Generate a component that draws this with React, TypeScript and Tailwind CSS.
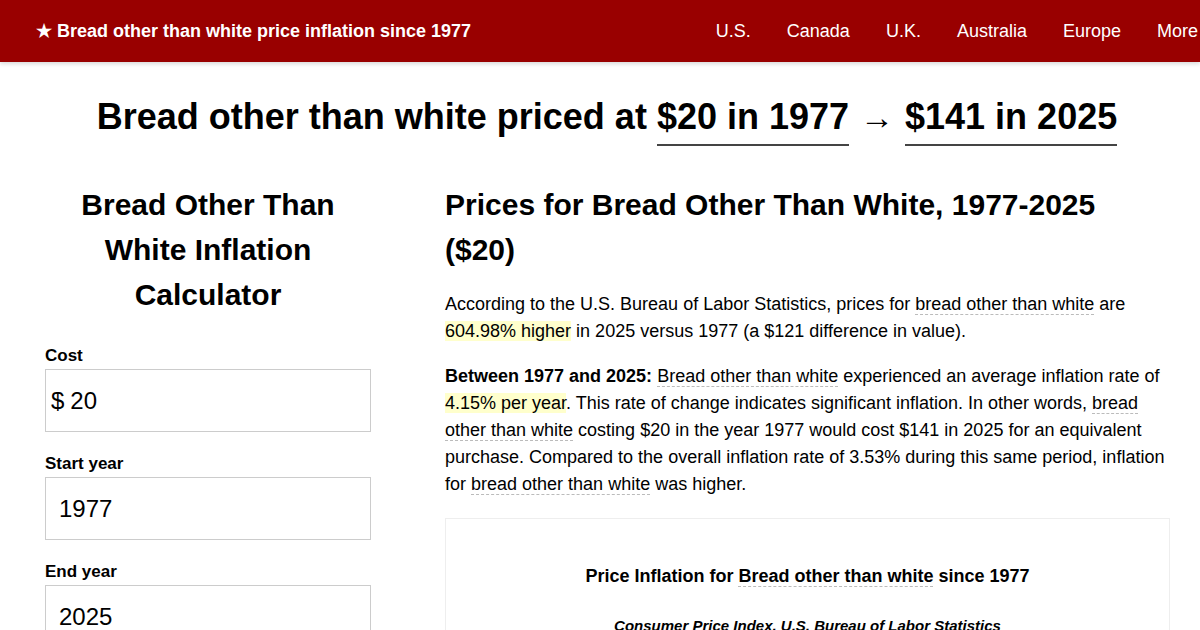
const navItems = ['U.S.', 'Canada', 'U.K.', 'Australia', 'Europe', 'More'];

function Term({ children }: { children: React.ReactNode }) {
  return <span className="border-b border-dashed border-[#bbb]">{children}</span>;
}

function Mark({ children }: { children: React.ReactNode }) {
  return <span className="bg-[#ffffcc]">{children}</span>;
}

function Field({ label, value, prefix }: { label: string; value: string; prefix?: boolean }) {
  return (
    <div className="mb-[19px]">
      <label className="block text-[17px] font-bold leading-[26px]">{label}</label>
      <div className="flex items-center h-[63px] border border-[#ccc] bg-white text-[24px]">
        {prefix ? <span className="pl-[5px] pr-[6px]">$</span> : null}
        <span className={prefix ? '' : 'pl-[13px]'}>{value}</span>
      </div>
    </div>
  );
}

export default function App() {
  return (
    <div className="min-h-[630px] bg-white text-black font-['Liberation_Sans',Arial,sans-serif] overflow-hidden">
      <header className="h-[62px] bg-[#990000] text-white flex items-center pl-[36px] shadow-[0_2px_4px_rgba(0,0,0,0.15)] relative">
        <div className="text-[18px] font-bold whitespace-nowrap">★ Bread other than white price inflation since 1977</div>
        <nav className="ml-auto flex gap-[36px] text-[18px] whitespace-nowrap mr-[2px]">
          {navItems.map((item) => (
            <span key={item}>{item}</span>
          ))}
        </nav>
      </header>

      <h1 className="flex items-start justify-center text-[36px] font-bold mt-[33px] leading-[44px] whitespace-nowrap pl-[14px]">
        <span>Bread other than white priced at&nbsp;</span>
        <span className="border-b-2 border-[#444] pb-[5px]">$20 in 1977</span>
        <span className="font-normal text-[34px] mx-[11px]">→</span>
        <span className="border-b-2 border-[#444] pb-[5px]">$141 in 2025</span>
      </h1>

      <div className="flex mt-[36px] px-[45px] gap-[74px]">
        <aside className="w-[326px] shrink-0">
          <h2 className="text-center text-[30px] font-bold leading-[45px] px-[20px]">
            Bread Other Than White Inflation Calculator
          </h2>
          <div className="mt-[26px]">
            <Field label="Cost" value="20" prefix />
            <Field label="Start year" value="1977" />
            <Field label="End year" value="2025" />
          </div>
        </aside>

        <main className="flex-1 min-w-0 -mr-[15px]">
          <h2 className="text-[30px] font-bold leading-[45px]">
            Prices for Bread Other Than White, 1977-2025 ($20)
          </h2>
          <p className="mt-[19px] text-[18px] leading-[27px]">
            According to the U.S. Bureau of Labor Statistics, prices for <Term>bread other than white</Term> are{' '}
            <Mark>604.98% higher</Mark> in 2025 versus 1977 (a $121 difference in value).
          </p>
          <p className="mt-[18px] text-[18px] leading-[27px]">
            <b>Between 1977 and 2025:</b> <Term>Bread other than white</Term> experienced an average inflation rate of{' '}
            <Mark>4.15% per year</Mark>. This rate of change indicates significant inflation. In other words,{' '}
            <Term>bread other than white</Term> costing $20 in the year 1977 would cost $141 in 2025 for an equivalent
            purchase. Compared to the overall inflation rate of 3.53% during this same period, inflation for{' '}
            <Term>bread other than white</Term> was higher.
          </p>
          <div className="mt-[20px] border border-[#eee] h-[200px] pt-[44px] text-center">
            <div className="text-[18px] font-bold">
              Price Inflation for <Term>Bread other than white</Term> since 1977
            </div>
            <div className="mt-[25px] text-[15px] font-bold italic">
              Consumer Price Index, U.S. Bureau of Labor Statistics
            </div>
          </div>
        </main>
      </div>
    </div>
  );
}
